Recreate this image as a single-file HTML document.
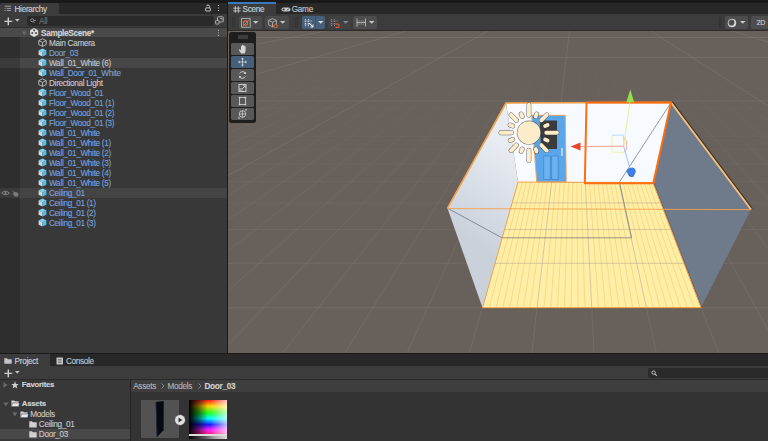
<!DOCTYPE html>
<html><head><meta charset="utf-8">
<style>
*{margin:0;padding:0;box-sizing:border-box}
html,body{width:768px;height:441px;overflow:hidden;background:#191919;font-family:"Liberation Sans",sans-serif;font-size:8.2px;letter-spacing:-0.3px;color:#c8c8c8}
.a{position:absolute}
.t{position:absolute;white-space:nowrap;line-height:10px;-webkit-text-stroke:0.12px currentColor}
.blue{color:#76a2dc}
</style></head><body>


<!-- ===== Hierarchy panel ===== -->
<div class="a" style="left:0;top:3px;width:227px;height:11px;background:#282828"></div>
<div class="a" style="left:0;top:3px;width:59px;height:11px;background:#3c3c3c;border-radius:2px 2px 0 0"></div>
<div class="a" style="left:0;top:14px;width:227px;height:13px;background:#3c3c3c"></div>
<div class="a" style="left:0;top:27px;width:227px;height:326px;background:#383838"></div>
<div class="a" style="left:0;top:37px;width:20px;height:316px;background:#2e2e2e"></div>
<div class="a" style="left:0;top:28px;width:227px;height:9px;background:#4a4a4a"></div>
<div class="a" style="left:0;top:58px;width:20px;height:10px;background:#3a3a3a"></div>
<div class="a" style="left:20px;top:58px;width:207px;height:10px;background:#474747"></div>
<div class="a" style="left:0;top:188px;width:20px;height:10px;background:#3a3a3a"></div>
<div class="a" style="left:20px;top:188px;width:207px;height:10px;background:#444444"></div>


<!-- hierarchy tab content -->
<svg class="a" style="left:4px;top:5px" width="8" height="7"><path d="M0.8 1.2H7M0.6 3.4H1.6M2.8 3.4H7M0.6 5.5H1.6M2.8 5.5H7" stroke="#c0c0c0" stroke-width="0.75"/></svg>
<div class="t" style="left:14.5px;top:5.1px;color:#d2d2d2">Hierarchy</div>
<svg class="a" style="left:205px;top:3.9px" width="6" height="8"><path d="M1.4 2.2 A1.65 1.65 0 0 1 4.6 2.3 V3.8" fill="none" stroke="#c4c4c4" stroke-width="1"/><rect x="0.6" y="3.9" width="4.8" height="3.1" rx="0.4" fill="none" stroke="#c4c4c4" stroke-width="1"/></svg>
<div class="a" style="left:217.6px;top:5px;width:1.2px;height:1.2px;background:#c4c4c4;box-shadow:0 2.5px #c4c4c4,0 5px #c4c4c4"></div>
<!-- toolbar -->
<svg class="a" style="left:3.5px;top:16.5px" width="9" height="9"><path d="M4.3 0.5V8.3M0.5 4.4H8.2" stroke="#d0d0d0" stroke-width="1.4"/></svg>
<svg class="a" style="left:14.5px;top:19.2px" width="5" height="3"><path d="M0 0H4.6L2.3 2.7Z" fill="#c4c4c4"/></svg>
<div class="a" style="left:27px;top:15.6px;width:187px;height:10.2px;background:#2a2a2a;border-radius:2.5px"></div>
<svg class="a" style="left:30px;top:18px" width="7" height="6"><circle cx="2.2" cy="2.3" r="1.5" fill="none" stroke="#9a9a9a" stroke-width="0.9"/><path d="M3.3 3.4 L4.6 4.8 M4 2.4 H6" stroke="#9a9a9a" stroke-width="0.9"/></svg>
<div class="t" style="left:39px;top:16.6px;color:#6f6f6f">All</div>
<svg class="a" style="left:214.5px;top:16px" width="9" height="9"><rect x="2.5" y="0.8" width="5.8" height="5.2" rx="0.8" fill="none" stroke="#b8b8b8" stroke-width="0.9"/><rect x="0.6" y="4.4" width="3.4" height="3.6" rx="0.6" fill="#3c3c3c" stroke="#b8b8b8" stroke-width="0.9"/><path d="M5 2.5h2v2" fill="none" stroke="#b8b8b8" stroke-width="0.8"/></svg>
<div class="a" style="left:0;top:27px;width:227px;height:1px;background:#303030"></div>
<!-- scene row -->
<svg class="a" style="left:22px;top:30.5px" width="5" height="5"><path d="M0 0.5H4.6L2.3 4.3Z" fill="#6a6a6a"/></svg>
<svg class="a" style="left:29.8px;top:28.2px" width="9" height="9"><path d="M4.1 0.3 L7.9 2.4 L7.9 6.5 L4.1 8.7 L0.3 6.5 L0.3 2.4Z" fill="#e4e4e4" stroke="#e4e4e4" stroke-width="0.5" stroke-linejoin="round"/><circle cx="4.1" cy="2.3" r="1.1" fill="#555"/><circle cx="2.3" cy="5.1" r="1.1" fill="#555"/><circle cx="5.9" cy="5.1" r="1.1" fill="#555"/></svg>
<div class="t" style="left:41px;top:28.8px;font-weight:bold;color:#d4d4d4">SampleScene*</div>
<div class="a" style="left:218.3px;top:29.5px;width:1.2px;height:1.2px;background:#aaaaaa;box-shadow:0 2.5px #aaaaaa,0 5px #aaaaaa"></div>
<!-- eye & hand on Ceiling_01 row -->
<svg class="a" style="left:1px;top:189.5px" width="9" height="6"><path d="M0.6 3 Q4.5 -0.6 8.4 3 Q4.5 6.6 0.6 3Z" fill="none" stroke="#8a8a8a" stroke-width="0.9"/><circle cx="4.5" cy="3" r="1.1" fill="#8a8a8a"/></svg>
<svg class="a" style="left:11px;top:189px" width="8" height="8"><path d="M1 1 L3.5 3.5 L3.5 2.8 Q4.5 2.5 5 3.2 Q6 3 6.5 3.8 Q7.5 4 7.4 5 L7 7.5 H3.8 L1.5 4.8 Q2 4.2 3 4.8 Z" fill="#7a7a7a"/></svg>
<svg class="a" style="left:38px;top:37.9px" width="9" height="9"><path d="M4.5 0.8 L8.2 2.6 L8.2 6.6 L4.5 8.4 L0.8 6.6 L0.8 2.6 Z M0.8 2.6 L4.5 4.4 L8.2 2.6 M4.5 4.4 L4.5 8.4" fill="none" stroke="#bdbdbd" stroke-width="0.9" stroke-linejoin="round"/></svg>
<div class="t" style="left:49px;top:38.8px">Main Camera</div>
<svg class="a" style="left:38px;top:47.9px" width="9" height="9"><path d="M4.5 0.6 L8.4 2.5 L4.5 4.4 L0.6 2.5 Z" fill="#7fd3f2"/><path d="M0.6 2.6 L4.5 4.5 L4.5 8.6 L0.6 6.7 Z" fill="#d6d6d6"/><path d="M8.4 2.6 L8.4 6.7 L4.5 8.6 L4.5 4.5 Z" fill="#4fc0ee"/></svg>
<div class="t blue" style="left:49px;top:48.8px">Door_03</div>
<svg class="a" style="left:38px;top:57.9px" width="9" height="9"><path d="M4.5 0.6 L8.4 2.5 L4.5 4.4 L0.6 2.5 Z" fill="#7fd3f2"/><path d="M0.6 2.6 L4.5 4.5 L4.5 8.6 L0.6 6.7 Z" fill="#d6d6d6"/><path d="M8.4 2.6 L8.4 6.7 L4.5 8.6 L4.5 4.5 Z" fill="#4fc0ee"/></svg>
<div class="t" style="left:49px;top:58.8px">Wall_01_White (6)</div>
<svg class="a" style="left:38px;top:67.9px" width="9" height="9"><path d="M4.5 0.6 L8.4 2.5 L4.5 4.4 L0.6 2.5 Z" fill="#7fd3f2"/><path d="M0.6 2.6 L4.5 4.5 L4.5 8.6 L0.6 6.7 Z" fill="#d6d6d6"/><path d="M8.4 2.6 L8.4 6.7 L4.5 8.6 L4.5 4.5 Z" fill="#4fc0ee"/></svg>
<div class="t blue" style="left:49px;top:68.8px">Wall_Door_01_White</div>
<svg class="a" style="left:38px;top:77.9px" width="9" height="9"><path d="M4.5 0.8 L8.2 2.6 L8.2 6.6 L4.5 8.4 L0.8 6.6 L0.8 2.6 Z M0.8 2.6 L4.5 4.4 L8.2 2.6 M4.5 4.4 L4.5 8.4" fill="none" stroke="#bdbdbd" stroke-width="0.9" stroke-linejoin="round"/></svg>
<div class="t" style="left:49px;top:78.8px">Directional Light</div>
<svg class="a" style="left:38px;top:87.9px" width="9" height="9"><path d="M4.5 0.6 L8.4 2.5 L4.5 4.4 L0.6 2.5 Z" fill="#7fd3f2"/><path d="M0.6 2.6 L4.5 4.5 L4.5 8.6 L0.6 6.7 Z" fill="#d6d6d6"/><path d="M8.4 2.6 L8.4 6.7 L4.5 8.6 L4.5 4.5 Z" fill="#4fc0ee"/></svg>
<div class="t blue" style="left:49px;top:88.8px">Floor_Wood_01</div>
<svg class="a" style="left:38px;top:97.9px" width="9" height="9"><path d="M4.5 0.6 L8.4 2.5 L4.5 4.4 L0.6 2.5 Z" fill="#7fd3f2"/><path d="M0.6 2.6 L4.5 4.5 L4.5 8.6 L0.6 6.7 Z" fill="#d6d6d6"/><path d="M8.4 2.6 L8.4 6.7 L4.5 8.6 L4.5 4.5 Z" fill="#4fc0ee"/></svg>
<div class="t blue" style="left:49px;top:98.8px">Floor_Wood_01 (1)</div>
<svg class="a" style="left:38px;top:107.9px" width="9" height="9"><path d="M4.5 0.6 L8.4 2.5 L4.5 4.4 L0.6 2.5 Z" fill="#7fd3f2"/><path d="M0.6 2.6 L4.5 4.5 L4.5 8.6 L0.6 6.7 Z" fill="#d6d6d6"/><path d="M8.4 2.6 L8.4 6.7 L4.5 8.6 L4.5 4.5 Z" fill="#4fc0ee"/></svg>
<div class="t blue" style="left:49px;top:108.8px">Floor_Wood_01 (2)</div>
<svg class="a" style="left:38px;top:117.9px" width="9" height="9"><path d="M4.5 0.6 L8.4 2.5 L4.5 4.4 L0.6 2.5 Z" fill="#7fd3f2"/><path d="M0.6 2.6 L4.5 4.5 L4.5 8.6 L0.6 6.7 Z" fill="#d6d6d6"/><path d="M8.4 2.6 L8.4 6.7 L4.5 8.6 L4.5 4.5 Z" fill="#4fc0ee"/></svg>
<div class="t blue" style="left:49px;top:118.8px">Floor_Wood_01 (3)</div>
<svg class="a" style="left:38px;top:127.9px" width="9" height="9"><path d="M4.5 0.6 L8.4 2.5 L4.5 4.4 L0.6 2.5 Z" fill="#7fd3f2"/><path d="M0.6 2.6 L4.5 4.5 L4.5 8.6 L0.6 6.7 Z" fill="#d6d6d6"/><path d="M8.4 2.6 L8.4 6.7 L4.5 8.6 L4.5 4.5 Z" fill="#4fc0ee"/></svg>
<div class="t blue" style="left:49px;top:128.8px">Wall_01_White</div>
<svg class="a" style="left:38px;top:137.9px" width="9" height="9"><path d="M4.5 0.6 L8.4 2.5 L4.5 4.4 L0.6 2.5 Z" fill="#7fd3f2"/><path d="M0.6 2.6 L4.5 4.5 L4.5 8.6 L0.6 6.7 Z" fill="#d6d6d6"/><path d="M8.4 2.6 L8.4 6.7 L4.5 8.6 L4.5 4.5 Z" fill="#4fc0ee"/></svg>
<div class="t blue" style="left:49px;top:138.8px">Wall_01_White (1)</div>
<svg class="a" style="left:38px;top:147.9px" width="9" height="9"><path d="M4.5 0.6 L8.4 2.5 L4.5 4.4 L0.6 2.5 Z" fill="#7fd3f2"/><path d="M0.6 2.6 L4.5 4.5 L4.5 8.6 L0.6 6.7 Z" fill="#d6d6d6"/><path d="M8.4 2.6 L8.4 6.7 L4.5 8.6 L4.5 4.5 Z" fill="#4fc0ee"/></svg>
<div class="t blue" style="left:49px;top:148.8px">Wall_01_White (2)</div>
<svg class="a" style="left:38px;top:157.9px" width="9" height="9"><path d="M4.5 0.6 L8.4 2.5 L4.5 4.4 L0.6 2.5 Z" fill="#7fd3f2"/><path d="M0.6 2.6 L4.5 4.5 L4.5 8.6 L0.6 6.7 Z" fill="#d6d6d6"/><path d="M8.4 2.6 L8.4 6.7 L4.5 8.6 L4.5 4.5 Z" fill="#4fc0ee"/></svg>
<div class="t blue" style="left:49px;top:158.8px">Wall_01_White (3)</div>
<svg class="a" style="left:38px;top:167.9px" width="9" height="9"><path d="M4.5 0.6 L8.4 2.5 L4.5 4.4 L0.6 2.5 Z" fill="#7fd3f2"/><path d="M0.6 2.6 L4.5 4.5 L4.5 8.6 L0.6 6.7 Z" fill="#d6d6d6"/><path d="M8.4 2.6 L8.4 6.7 L4.5 8.6 L4.5 4.5 Z" fill="#4fc0ee"/></svg>
<div class="t blue" style="left:49px;top:168.8px">Wall_01_White (4)</div>
<svg class="a" style="left:38px;top:177.9px" width="9" height="9"><path d="M4.5 0.6 L8.4 2.5 L4.5 4.4 L0.6 2.5 Z" fill="#7fd3f2"/><path d="M0.6 2.6 L4.5 4.5 L4.5 8.6 L0.6 6.7 Z" fill="#d6d6d6"/><path d="M8.4 2.6 L8.4 6.7 L4.5 8.6 L4.5 4.5 Z" fill="#4fc0ee"/></svg>
<div class="t blue" style="left:49px;top:178.8px">Wall_01_White (5)</div>
<svg class="a" style="left:38px;top:187.9px" width="9" height="9"><path d="M4.5 0.6 L8.4 2.5 L4.5 4.4 L0.6 2.5 Z" fill="#7fd3f2"/><path d="M0.6 2.6 L4.5 4.5 L4.5 8.6 L0.6 6.7 Z" fill="#d6d6d6"/><path d="M8.4 2.6 L8.4 6.7 L4.5 8.6 L4.5 4.5 Z" fill="#4fc0ee"/></svg>
<div class="t blue" style="left:49px;top:188.8px">Ceiling_01</div>
<svg class="a" style="left:38px;top:197.9px" width="9" height="9"><path d="M4.5 0.6 L8.4 2.5 L4.5 4.4 L0.6 2.5 Z" fill="#7fd3f2"/><path d="M0.6 2.6 L4.5 4.5 L4.5 8.6 L0.6 6.7 Z" fill="#d6d6d6"/><path d="M8.4 2.6 L8.4 6.7 L4.5 8.6 L4.5 4.5 Z" fill="#4fc0ee"/></svg>
<div class="t blue" style="left:49px;top:198.8px">Ceiling_01 (1)</div>
<svg class="a" style="left:38px;top:207.9px" width="9" height="9"><path d="M4.5 0.6 L8.4 2.5 L4.5 4.4 L0.6 2.5 Z" fill="#7fd3f2"/><path d="M0.6 2.6 L4.5 4.5 L4.5 8.6 L0.6 6.7 Z" fill="#d6d6d6"/><path d="M8.4 2.6 L8.4 6.7 L4.5 8.6 L4.5 4.5 Z" fill="#4fc0ee"/></svg>
<div class="t blue" style="left:49px;top:208.8px">Ceiling_01 (2)</div>
<svg class="a" style="left:38px;top:217.9px" width="9" height="9"><path d="M4.5 0.6 L8.4 2.5 L4.5 4.4 L0.6 2.5 Z" fill="#7fd3f2"/><path d="M0.6 2.6 L4.5 4.5 L4.5 8.6 L0.6 6.7 Z" fill="#d6d6d6"/><path d="M8.4 2.6 L8.4 6.7 L4.5 8.6 L4.5 4.5 Z" fill="#4fc0ee"/></svg>
<div class="t blue" style="left:49px;top:218.8px">Ceiling_01 (3)</div>
<!-- separator -->
<div class="a" style="left:227px;top:3px;width:1px;height:350px;background:#191919"></div>

<!-- ===== Scene panel ===== -->
<div class="a" style="left:228px;top:3px;width:540px;height:11px;background:#282828"></div>
<div class="a" style="left:228px;top:3px;width:48px;height:11px;background:#3c3c3c"></div>
<div class="a" style="left:228px;top:2px;width:48px;height:2px;background:#3a79bb"></div>
<div class="a" style="left:228px;top:14px;width:540px;height:16px;background:#3c3c3c"></div>
<!--SCENE--><svg class="a" style="left:228px;top:30px" width="540" height="323" viewBox="228 30 540 323">
<defs>
<linearGradient id="gfade" gradientUnits="userSpaceOnUse" x1="0" y1="30" x2="0" y2="353"><stop offset="0" stop-color="#c8c4c0" stop-opacity="0.0"/><stop offset="0.5" stop-color="#c8c4c0" stop-opacity="0.07"/><stop offset="1" stop-color="#c8c4c0" stop-opacity="0.12"/></linearGradient>
<linearGradient id="lw" gradientUnits="userSpaceOnUse" x1="510" y1="150" x2="455" y2="230"><stop offset="0" stop-color="#e8ecf2"/><stop offset="1" stop-color="#cad1db"/></linearGradient>
</defs>
<rect x="228" y="30" width="540" height="323" fill="#68615b"/>
<line x1="228" y1="307.80" x2="768" y2="307.80" stroke="#c8c4c0" stroke-opacity="0.110" stroke-width="0.9"/>
<line x1="228" y1="263.26" x2="768" y2="263.26" stroke="#c8c4c0" stroke-opacity="0.130" stroke-width="0.9"/>
<line x1="228" y1="229.45" x2="768" y2="229.45" stroke="#c8c4c0" stroke-opacity="0.082" stroke-width="0.9"/>
<line x1="228" y1="202.91" x2="768" y2="202.91" stroke="#c8c4c0" stroke-opacity="0.071" stroke-width="0.9"/>
<line x1="228" y1="181.53" x2="768" y2="181.53" stroke="#c8c4c0" stroke-opacity="0.061" stroke-width="0.9"/>
<line x1="228" y1="163.92" x2="768" y2="163.92" stroke="#c8c4c0" stroke-opacity="0.053" stroke-width="0.9"/>
<line x1="228" y1="149.18" x2="768" y2="149.18" stroke="#c8c4c0" stroke-opacity="0.047" stroke-width="0.9"/>
<line x1="228" y1="136.66" x2="768" y2="136.66" stroke="#c8c4c0" stroke-opacity="0.041" stroke-width="0.9"/>
<line x1="228" y1="125.89" x2="768" y2="125.89" stroke="#c8c4c0" stroke-opacity="0.037" stroke-width="0.9"/>
<line x1="228" y1="116.52" x2="768" y2="116.52" stroke="#c8c4c0" stroke-opacity="0.033" stroke-width="0.9"/>
<line x1="228" y1="108.31" x2="768" y2="108.31" stroke="#c8c4c0" stroke-opacity="0.029" stroke-width="0.9"/>
<line x1="228" y1="101.04" x2="768" y2="101.04" stroke="#c8c4c0" stroke-opacity="0.130" stroke-width="0.9"/>
<line x1="228" y1="94.57" x2="768" y2="94.57" stroke="#c8c4c0" stroke-opacity="0.023" stroke-width="0.9"/>
<line x1="228" y1="88.77" x2="768" y2="88.77" stroke="#c8c4c0" stroke-opacity="0.020" stroke-width="0.9"/>
<line x1="228" y1="83.54" x2="768" y2="83.54" stroke="#c8c4c0" stroke-opacity="0.018" stroke-width="0.9"/>
<line x1="228" y1="78.80" x2="768" y2="78.80" stroke="#c8c4c0" stroke-opacity="0.016" stroke-width="0.9"/>
<line x1="228" y1="74.49" x2="768" y2="74.49" stroke="#c8c4c0" stroke-opacity="0.014" stroke-width="0.9"/>
<line x1="228" y1="70.54" x2="768" y2="70.54" stroke="#c8c4c0" stroke-opacity="0.012" stroke-width="0.9"/>
<line x1="228" y1="66.92" x2="768" y2="66.92" stroke="#c8c4c0" stroke-opacity="0.011" stroke-width="0.9"/>
<line x1="228" y1="57.66" x2="768" y2="57.66" stroke="#c8c4c0" stroke-opacity="0.130" stroke-width="0.9"/>
<line x1="228" y1="37.54" x2="768" y2="37.54" stroke="#c8c4c0" stroke-opacity="0.130" stroke-width="0.9"/>
<line x1="234.51" y1="30" x2="-2085.68" y2="353" stroke="url(#gfade)" stroke-width="0.9"/>
<line x1="242.49" y1="30" x2="-2023.36" y2="353" stroke="url(#gfade)" stroke-width="0.9"/>
<line x1="250.46" y1="30" x2="-1961.04" y2="353" stroke="#c8c4c0" stroke-opacity="0.13" stroke-width="0.9"/>
<line x1="258.44" y1="30" x2="-1898.72" y2="353" stroke="url(#gfade)" stroke-width="0.9"/>
<line x1="266.41" y1="30" x2="-1836.40" y2="353" stroke="url(#gfade)" stroke-width="0.9"/>
<line x1="274.39" y1="30" x2="-1774.08" y2="353" stroke="url(#gfade)" stroke-width="0.9"/>
<line x1="282.36" y1="30" x2="-1711.76" y2="353" stroke="url(#gfade)" stroke-width="0.9"/>
<line x1="290.34" y1="30" x2="-1649.44" y2="353" stroke="url(#gfade)" stroke-width="0.9"/>
<line x1="298.31" y1="30" x2="-1587.12" y2="353" stroke="url(#gfade)" stroke-width="0.9"/>
<line x1="306.29" y1="30" x2="-1524.80" y2="353" stroke="url(#gfade)" stroke-width="0.9"/>
<line x1="314.26" y1="30" x2="-1462.48" y2="353" stroke="url(#gfade)" stroke-width="0.9"/>
<line x1="322.24" y1="30" x2="-1400.16" y2="353" stroke="url(#gfade)" stroke-width="0.9"/>
<line x1="330.21" y1="30" x2="-1337.84" y2="353" stroke="#c8c4c0" stroke-opacity="0.13" stroke-width="0.9"/>
<line x1="338.19" y1="30" x2="-1275.52" y2="353" stroke="url(#gfade)" stroke-width="0.9"/>
<line x1="346.16" y1="30" x2="-1213.20" y2="353" stroke="url(#gfade)" stroke-width="0.9"/>
<line x1="354.14" y1="30" x2="-1150.88" y2="353" stroke="url(#gfade)" stroke-width="0.9"/>
<line x1="362.11" y1="30" x2="-1088.56" y2="353" stroke="url(#gfade)" stroke-width="0.9"/>
<line x1="370.09" y1="30" x2="-1026.24" y2="353" stroke="url(#gfade)" stroke-width="0.9"/>
<line x1="378.06" y1="30" x2="-963.92" y2="353" stroke="url(#gfade)" stroke-width="0.9"/>
<line x1="386.04" y1="30" x2="-901.60" y2="353" stroke="url(#gfade)" stroke-width="0.9"/>
<line x1="394.01" y1="30" x2="-839.28" y2="353" stroke="url(#gfade)" stroke-width="0.9"/>
<line x1="401.99" y1="30" x2="-776.96" y2="353" stroke="url(#gfade)" stroke-width="0.9"/>
<line x1="409.97" y1="30" x2="-714.64" y2="353" stroke="#c8c4c0" stroke-opacity="0.13" stroke-width="0.9"/>
<line x1="417.94" y1="30" x2="-652.32" y2="353" stroke="url(#gfade)" stroke-width="0.9"/>
<line x1="425.92" y1="30" x2="-590.00" y2="353" stroke="url(#gfade)" stroke-width="0.9"/>
<line x1="433.89" y1="30" x2="-527.68" y2="353" stroke="url(#gfade)" stroke-width="0.9"/>
<line x1="441.87" y1="30" x2="-465.36" y2="353" stroke="url(#gfade)" stroke-width="0.9"/>
<line x1="449.84" y1="30" x2="-403.04" y2="353" stroke="url(#gfade)" stroke-width="0.9"/>
<line x1="457.82" y1="30" x2="-340.72" y2="353" stroke="url(#gfade)" stroke-width="0.9"/>
<line x1="465.79" y1="30" x2="-278.40" y2="353" stroke="url(#gfade)" stroke-width="0.9"/>
<line x1="473.77" y1="30" x2="-216.08" y2="353" stroke="url(#gfade)" stroke-width="0.9"/>
<line x1="481.74" y1="30" x2="-153.76" y2="353" stroke="url(#gfade)" stroke-width="0.9"/>
<line x1="489.72" y1="30" x2="-91.44" y2="353" stroke="#c8c4c0" stroke-opacity="0.13" stroke-width="0.9"/>
<line x1="497.69" y1="30" x2="-29.12" y2="353" stroke="url(#gfade)" stroke-width="0.9"/>
<line x1="505.67" y1="30" x2="33.20" y2="353" stroke="url(#gfade)" stroke-width="0.9"/>
<line x1="513.64" y1="30" x2="95.52" y2="353" stroke="url(#gfade)" stroke-width="0.9"/>
<line x1="521.62" y1="30" x2="157.84" y2="353" stroke="url(#gfade)" stroke-width="0.9"/>
<line x1="529.59" y1="30" x2="220.16" y2="353" stroke="url(#gfade)" stroke-width="0.9"/>
<line x1="537.57" y1="30" x2="282.48" y2="353" stroke="url(#gfade)" stroke-width="0.9"/>
<line x1="545.54" y1="30" x2="344.80" y2="353" stroke="url(#gfade)" stroke-width="0.9"/>
<line x1="553.52" y1="30" x2="407.12" y2="353" stroke="url(#gfade)" stroke-width="0.9"/>
<line x1="561.49" y1="30" x2="469.44" y2="353" stroke="url(#gfade)" stroke-width="0.9"/>
<line x1="569.47" y1="30" x2="531.76" y2="353" stroke="#c8c4c0" stroke-opacity="0.13" stroke-width="0.9"/>
<line x1="577.44" y1="30" x2="594.08" y2="353" stroke="url(#gfade)" stroke-width="0.9"/>
<line x1="585.42" y1="30" x2="656.40" y2="353" stroke="url(#gfade)" stroke-width="0.9"/>
<line x1="593.39" y1="30" x2="718.72" y2="353" stroke="url(#gfade)" stroke-width="0.9"/>
<line x1="601.37" y1="30" x2="781.04" y2="353" stroke="url(#gfade)" stroke-width="0.9"/>
<line x1="609.34" y1="30" x2="843.35" y2="353" stroke="url(#gfade)" stroke-width="0.9"/>
<line x1="617.32" y1="30" x2="905.67" y2="353" stroke="url(#gfade)" stroke-width="0.9"/>
<line x1="625.29" y1="30" x2="967.99" y2="353" stroke="url(#gfade)" stroke-width="0.9"/>
<line x1="633.27" y1="30" x2="1030.31" y2="353" stroke="url(#gfade)" stroke-width="0.9"/>
<line x1="641.24" y1="30" x2="1092.63" y2="353" stroke="url(#gfade)" stroke-width="0.9"/>
<line x1="649.22" y1="30" x2="1154.95" y2="353" stroke="#c8c4c0" stroke-opacity="0.13" stroke-width="0.9"/>
<line x1="657.19" y1="30" x2="1217.27" y2="353" stroke="url(#gfade)" stroke-width="0.9"/>
<line x1="665.17" y1="30" x2="1279.59" y2="353" stroke="url(#gfade)" stroke-width="0.9"/>
<line x1="673.14" y1="30" x2="1341.91" y2="353" stroke="url(#gfade)" stroke-width="0.9"/>
<line x1="681.12" y1="30" x2="1404.23" y2="353" stroke="url(#gfade)" stroke-width="0.9"/>
<line x1="689.09" y1="30" x2="1466.55" y2="353" stroke="url(#gfade)" stroke-width="0.9"/>
<line x1="697.07" y1="30" x2="1528.87" y2="353" stroke="url(#gfade)" stroke-width="0.9"/>
<line x1="705.04" y1="30" x2="1591.19" y2="353" stroke="url(#gfade)" stroke-width="0.9"/>
<line x1="713.02" y1="30" x2="1653.51" y2="353" stroke="url(#gfade)" stroke-width="0.9"/>
<line x1="720.99" y1="30" x2="1715.83" y2="353" stroke="url(#gfade)" stroke-width="0.9"/>
<line x1="728.97" y1="30" x2="1778.15" y2="353" stroke="#c8c4c0" stroke-opacity="0.13" stroke-width="0.9"/>
<line x1="736.94" y1="30" x2="1840.47" y2="353" stroke="url(#gfade)" stroke-width="0.9"/>
<line x1="744.92" y1="30" x2="1902.79" y2="353" stroke="url(#gfade)" stroke-width="0.9"/>
<line x1="752.89" y1="30" x2="1965.11" y2="353" stroke="url(#gfade)" stroke-width="0.9"/>
<line x1="760.87" y1="30" x2="2027.43" y2="353" stroke="url(#gfade)" stroke-width="0.9"/>
<polygon points="506.00,103.00 447.50,208.20 482.50,307.80 518.00,182.00" fill="url(#lw)"/>
<polygon points="671.00,102.50 751.00,209.50 701.00,307.60 653.00,183.00" fill="#6f7a8b"/>
<polygon points="506.00,103.00 671.00,102.50 653.00,183.00 518.00,182.00" fill="#f7faff"/>
<polygon points="518.00,182.00 653.00,183.00 701.00,307.60 482.50,307.80" fill="#ffefa6"/>
<line x1="522.36" y1="182" x2="489.18" y2="307.7" stroke="#efc46c" stroke-width="1.0" stroke-opacity="0.5"/>
<line x1="526.56" y1="182" x2="496.02" y2="307.7" stroke="#efc46c" stroke-width="1.0" stroke-opacity="0.5"/>
<line x1="530.75" y1="182" x2="502.86" y2="307.7" stroke="#efc46c" stroke-width="1.0" stroke-opacity="0.5"/>
<line x1="534.95" y1="182" x2="509.70" y2="307.7" stroke="#efc46c" stroke-width="1.0" stroke-opacity="0.5"/>
<line x1="539.14" y1="182" x2="516.53" y2="307.7" stroke="#efc46c" stroke-width="1.0" stroke-opacity="0.5"/>
<line x1="543.33" y1="182" x2="523.37" y2="307.7" stroke="#efc46c" stroke-width="1.0" stroke-opacity="0.5"/>
<line x1="547.53" y1="182" x2="530.21" y2="307.7" stroke="#efc46c" stroke-width="1.0" stroke-opacity="0.5"/>
<line x1="555.91" y1="182" x2="543.88" y2="307.7" stroke="#efc46c" stroke-width="1.0" stroke-opacity="0.5"/>
<line x1="560.11" y1="182" x2="550.72" y2="307.7" stroke="#efc46c" stroke-width="1.0" stroke-opacity="0.5"/>
<line x1="564.30" y1="182" x2="557.56" y2="307.7" stroke="#efc46c" stroke-width="1.0" stroke-opacity="0.5"/>
<line x1="568.49" y1="182" x2="564.39" y2="307.7" stroke="#efc46c" stroke-width="1.0" stroke-opacity="0.5"/>
<line x1="572.69" y1="182" x2="571.23" y2="307.7" stroke="#efc46c" stroke-width="1.0" stroke-opacity="0.5"/>
<line x1="576.88" y1="182" x2="578.07" y2="307.7" stroke="#efc46c" stroke-width="1.0" stroke-opacity="0.5"/>
<line x1="581.08" y1="182" x2="584.91" y2="307.7" stroke="#efc46c" stroke-width="1.0" stroke-opacity="0.5"/>
<line x1="589.46" y1="182" x2="598.58" y2="307.7" stroke="#efc46c" stroke-width="1.0" stroke-opacity="0.5"/>
<line x1="593.66" y1="182" x2="605.42" y2="307.7" stroke="#efc46c" stroke-width="1.0" stroke-opacity="0.5"/>
<line x1="597.85" y1="182" x2="612.25" y2="307.7" stroke="#efc46c" stroke-width="1.0" stroke-opacity="0.5"/>
<line x1="602.04" y1="182" x2="619.09" y2="307.7" stroke="#efc46c" stroke-width="1.0" stroke-opacity="0.5"/>
<line x1="606.24" y1="182" x2="625.93" y2="307.7" stroke="#efc46c" stroke-width="1.0" stroke-opacity="0.5"/>
<line x1="610.43" y1="182" x2="632.77" y2="307.7" stroke="#efc46c" stroke-width="1.0" stroke-opacity="0.5"/>
<line x1="614.62" y1="182" x2="639.60" y2="307.7" stroke="#efc46c" stroke-width="1.0" stroke-opacity="0.5"/>
<line x1="623.01" y1="182" x2="653.28" y2="307.7" stroke="#efc46c" stroke-width="1.0" stroke-opacity="0.5"/>
<line x1="627.21" y1="182" x2="660.12" y2="307.7" stroke="#efc46c" stroke-width="1.0" stroke-opacity="0.5"/>
<line x1="631.40" y1="182" x2="666.95" y2="307.7" stroke="#efc46c" stroke-width="1.0" stroke-opacity="0.5"/>
<line x1="635.59" y1="182" x2="673.79" y2="307.7" stroke="#efc46c" stroke-width="1.0" stroke-opacity="0.5"/>
<line x1="639.79" y1="182" x2="680.63" y2="307.7" stroke="#efc46c" stroke-width="1.0" stroke-opacity="0.5"/>
<line x1="643.98" y1="182" x2="687.46" y2="307.7" stroke="#efc46c" stroke-width="1.0" stroke-opacity="0.5"/>
<line x1="648.17" y1="182" x2="694.30" y2="307.7" stroke="#efc46c" stroke-width="1.0" stroke-opacity="0.5"/>
<line x1="551.72" y1="182" x2="537.04" y2="307.7" stroke="#aaa08a" stroke-width="0.7" stroke-opacity="0.7"/>
<line x1="585.27" y1="182" x2="591.74" y2="307.7" stroke="#aaa08a" stroke-width="0.7" stroke-opacity="0.7"/>
<line x1="618.82" y1="182" x2="646.44" y2="307.7" stroke="#aaa08a" stroke-width="0.7" stroke-opacity="0.7"/>
<line x1="495.01" y1="263.26" x2="683.90" y2="263.26" stroke="#aaa08a" stroke-width="0.7" stroke-opacity="0.7"/>
<line x1="504.65" y1="229.45" x2="670.78" y2="229.45" stroke="#aaa08a" stroke-width="0.7" stroke-opacity="0.7"/>
<line x1="512.21" y1="202.91" x2="660.48" y2="202.91" stroke="#aaa08a" stroke-width="0.7" stroke-opacity="0.7"/>
<polyline points="671,102.5 619.5,182 631.6,237.8 502,237.8 447.5,208.2" fill="none" stroke="#5a6272" stroke-width="0.8" stroke-opacity="0.8"/>
<polygon points="531.6,115.3 565.3,115.3 566.3,182 536.7,182" fill="#5aa6ea" stroke="#f3a455" stroke-width="0.9"/>
<polygon points="539.8,120.4 557,120.4 557,149 541,149" fill="#3b3b3d"/>
<path d="M543.7 156 h6.6 v23.5 h-6.6z M551.6 156 h6.6 v23.5 h-6.6z" fill="#6ab2f2" stroke="#3a7cc0" stroke-width="0.6"/>
<line x1="562" y1="148" x2="562" y2="156" stroke="#ffffff" stroke-width="1"/>
<polyline points="672.3,101.6 752.3,208.6" fill="none" stroke="#3a2e22" stroke-opacity="0.8" stroke-width="1.2"/>
<polyline points="447.50,208.20 506.00,103.00 671.00,102.50 751.00,209.50" fill="none" stroke="#f4a24a" stroke-width="1.6" stroke-linejoin="round"/>
<polyline points="671.00,102.50 751.00,209.50" fill="none" stroke="#f3c486" stroke-width="1.3"/>
<polyline points="482.50,307.80 701.00,307.60" fill="none" stroke="#f4a24a" stroke-width="1.1"/>
<polyline points="482.5,308.8 701,308.6" fill="none" stroke="#6a5a40" stroke-opacity="0.6" stroke-width="0.8"/>
<polyline points="518.00,182.00 482.50,307.80" fill="none" stroke="#f4a24a" stroke-width="0.9"/>
<polyline points="654,183 702,307.6" fill="none" stroke="#5a5040" stroke-opacity="0.6" stroke-width="0.8"/>
<polyline points="653.00,183.00 701.00,307.60" fill="none" stroke="#f4a24a" stroke-width="1.0"/>
<line x1="518" y1="182" x2="653" y2="182.5" stroke="#f4a24a" stroke-width="0.9"/>
<line x1="447.5" y1="208.6" x2="751" y2="209.6" stroke="#f4a24a" stroke-width="0.9"/>
<polygon points="586.5,102.4 671,102.4 653.3,183.2 584.8,183.2" fill="none" stroke="#ff6d10" stroke-width="2" stroke-linejoin="round"/>
<path d="M612 135.2 H623.7 V146.2" fill="none" stroke="#9cc8ff" stroke-width="0.7" stroke-opacity="0.9"/>
<path d="M612 135.2 V152.3 H623.7" fill="none" stroke="#e8f07a" stroke-width="0.7" stroke-opacity="0.9"/>
<path d="M623.7 137 L626.5 141 L626.5 150 L623.7 152.3" fill="none" stroke="#ff8870" stroke-width="0.7" stroke-opacity="0.9"/>
<line x1="623.7" y1="146.2" x2="580" y2="146.5" stroke="#f58a70" stroke-width="0.8"/>
<polygon points="570.5,146.5 580.5,142.6 580.5,150.4" fill="#e8452a"/>
<line x1="623.7" y1="146.2" x2="630" y2="101" stroke="#dcef80" stroke-width="0.8"/>
<polygon points="630.3,89.5 634.2,102.3 626.3,102.3" fill="#8fe04a"/>
<line x1="623.7" y1="146.2" x2="629.5" y2="167" stroke="#86bff5" stroke-width="0.9"/>
<path d="M626.2 171.5 Q628 167.5 632.5 167.6 Q636.5 168.8 635.5 172.5 L633.3 177.3 Z" fill="#3f7fe8"/>
<path d="M626.2 171.5 L633.3 177.3 L629.5 176.5Z" fill="#2a5fc0"/>
<line x1="528.90" y1="115.30" x2="528.90" y2="104.70" stroke="#3a3530" stroke-opacity="0.7" stroke-width="4.9" stroke-linecap="round"/>
<line x1="535.64" y1="116.44" x2="536.63" y2="114.04" stroke="#3a3530" stroke-opacity="0.7" stroke-width="4.9" stroke-linecap="round"/>
<line x1="541.35" y1="120.25" x2="546.72" y2="114.88" stroke="#3a3530" stroke-opacity="0.7" stroke-width="4.9" stroke-linecap="round"/>
<line x1="545.16" y1="125.96" x2="547.56" y2="124.97" stroke="#3a3530" stroke-opacity="0.7" stroke-width="4.9" stroke-linecap="round"/>
<line x1="546.30" y1="132.70" x2="556.90" y2="132.70" stroke="#3a3530" stroke-opacity="0.7" stroke-width="4.9" stroke-linecap="round"/>
<line x1="545.16" y1="139.44" x2="547.56" y2="140.43" stroke="#3a3530" stroke-opacity="0.7" stroke-width="4.9" stroke-linecap="round"/>
<line x1="541.35" y1="145.15" x2="546.72" y2="150.52" stroke="#3a3530" stroke-opacity="0.7" stroke-width="4.9" stroke-linecap="round"/>
<line x1="535.64" y1="148.96" x2="536.63" y2="151.36" stroke="#3a3530" stroke-opacity="0.7" stroke-width="4.9" stroke-linecap="round"/>
<line x1="528.90" y1="150.10" x2="528.90" y2="160.70" stroke="#3a3530" stroke-opacity="0.7" stroke-width="4.9" stroke-linecap="round"/>
<line x1="522.16" y1="148.96" x2="521.17" y2="151.36" stroke="#3a3530" stroke-opacity="0.7" stroke-width="4.9" stroke-linecap="round"/>
<line x1="516.45" y1="145.15" x2="511.08" y2="150.52" stroke="#3a3530" stroke-opacity="0.7" stroke-width="4.9" stroke-linecap="round"/>
<line x1="512.64" y1="139.44" x2="510.24" y2="140.43" stroke="#3a3530" stroke-opacity="0.7" stroke-width="4.9" stroke-linecap="round"/>
<line x1="511.50" y1="132.70" x2="500.90" y2="132.70" stroke="#3a3530" stroke-opacity="0.7" stroke-width="4.9" stroke-linecap="round"/>
<line x1="512.64" y1="125.96" x2="510.24" y2="124.97" stroke="#3a3530" stroke-opacity="0.7" stroke-width="4.9" stroke-linecap="round"/>
<line x1="516.45" y1="120.25" x2="511.08" y2="114.88" stroke="#3a3530" stroke-opacity="0.7" stroke-width="4.9" stroke-linecap="round"/>
<line x1="522.16" y1="116.44" x2="521.17" y2="114.04" stroke="#3a3530" stroke-opacity="0.7" stroke-width="4.9" stroke-linecap="round"/>
<line x1="528.90" y1="115.30" x2="528.90" y2="104.70" stroke="#fdecca" stroke-opacity="1" stroke-width="3.9" stroke-linecap="round"/>
<line x1="535.64" y1="116.44" x2="536.63" y2="114.04" stroke="#fdecca" stroke-opacity="1" stroke-width="3.9" stroke-linecap="round"/>
<line x1="541.35" y1="120.25" x2="546.72" y2="114.88" stroke="#fdecca" stroke-opacity="1" stroke-width="3.9" stroke-linecap="round"/>
<line x1="545.16" y1="125.96" x2="547.56" y2="124.97" stroke="#fdecca" stroke-opacity="1" stroke-width="3.9" stroke-linecap="round"/>
<line x1="546.30" y1="132.70" x2="556.90" y2="132.70" stroke="#fdecca" stroke-opacity="1" stroke-width="3.9" stroke-linecap="round"/>
<line x1="545.16" y1="139.44" x2="547.56" y2="140.43" stroke="#fdecca" stroke-opacity="1" stroke-width="3.9" stroke-linecap="round"/>
<line x1="541.35" y1="145.15" x2="546.72" y2="150.52" stroke="#fdecca" stroke-opacity="1" stroke-width="3.9" stroke-linecap="round"/>
<line x1="535.64" y1="148.96" x2="536.63" y2="151.36" stroke="#fdecca" stroke-opacity="1" stroke-width="3.9" stroke-linecap="round"/>
<line x1="528.90" y1="150.10" x2="528.90" y2="160.70" stroke="#fdecca" stroke-opacity="1" stroke-width="3.9" stroke-linecap="round"/>
<line x1="522.16" y1="148.96" x2="521.17" y2="151.36" stroke="#fdecca" stroke-opacity="1" stroke-width="3.9" stroke-linecap="round"/>
<line x1="516.45" y1="145.15" x2="511.08" y2="150.52" stroke="#fdecca" stroke-opacity="1" stroke-width="3.9" stroke-linecap="round"/>
<line x1="512.64" y1="139.44" x2="510.24" y2="140.43" stroke="#fdecca" stroke-opacity="1" stroke-width="3.9" stroke-linecap="round"/>
<line x1="511.50" y1="132.70" x2="500.90" y2="132.70" stroke="#fdecca" stroke-opacity="1" stroke-width="3.9" stroke-linecap="round"/>
<line x1="512.64" y1="125.96" x2="510.24" y2="124.97" stroke="#fdecca" stroke-opacity="1" stroke-width="3.9" stroke-linecap="round"/>
<line x1="516.45" y1="120.25" x2="511.08" y2="114.88" stroke="#fdecca" stroke-opacity="1" stroke-width="3.9" stroke-linecap="round"/>
<line x1="522.16" y1="116.44" x2="521.17" y2="114.04" stroke="#fdecca" stroke-opacity="1" stroke-width="3.9" stroke-linecap="round"/>
<circle cx="528.9" cy="132.7" r="12.1" fill="#3a3530" fill-opacity="0.65"/>
<circle cx="528.9" cy="132.7" r="11.5" fill="#fdecca"/>
</svg><!--/SCENE-->
<div class="a" style="left:228px;top:29.6px;width:540px;height:0.8px;background:#2c2c2c"></div>
<!-- tool palette -->
<div class="a" style="left:229.2px;top:32.2px;width:26.6px;height:91px;background:#1e1e1e;border-radius:2.5px"></div>
<div class="a" style="left:237.7px;top:35px;width:10px;height:4px;background:#3d3d3d"></div>
<div class="a" style="left:231px;top:42.60px;width:23px;height:12.2px;background:#585858;border-radius:1.5px"></div>
<svg class="a" style="left:238px;top:43.90px" width="9" height="10"><path d="M3.2 9.5 Q1.5 7.5 0.8 5.8 Q1.2 5 2.2 5.6 L3 6.5 V2.2 Q3.5 1.5 4 2.2 V5 V1.2 Q4.6 0.5 5.2 1.2 V5 V1.6 Q5.8 0.9 6.4 1.6 V5.2 V2.6 Q7 2 7.6 2.6 V6.5 Q7.5 8.8 6.5 9.5 Z" fill="#d6d6d6"/></svg>
<div class="a" style="left:231px;top:55.65px;width:23px;height:12.2px;background:#46607c;border-radius:1.5px"></div>
<svg class="a" style="left:238px;top:56.95px" width="9" height="10"><path d="M4.5 0.5 L6 2.2 H3Z M4.5 9.5 L6 7.8 H3Z M0 5 L1.7 3.5 V6.5Z M9 5 L7.3 3.5 V6.5Z" fill="#d6d6d6"/><path d="M4.5 2 V8 M1.5 5 H7.5" stroke="#d6d6d6" stroke-width="0.8"/></svg>
<div class="a" style="left:231px;top:68.70px;width:23px;height:12.2px;background:#585858;border-radius:1.5px"></div>
<svg class="a" style="left:238px;top:70.00px" width="9" height="10"><path d="M7.3 3.2 A3.2 3.2 0 0 0 1.6 3.6 M1.7 6.8 A3.2 3.2 0 0 0 7.4 6.4" fill="none" stroke="#d6d6d6" stroke-width="0.9"/><path d="M8 1.8 L7.8 4.2 L5.6 3.4Z M1 8.2 L1.2 5.8 L3.4 6.6Z" fill="#d6d6d6"/></svg>
<div class="a" style="left:231px;top:81.75px;width:23px;height:12.2px;background:#585858;border-radius:1.5px"></div>
<svg class="a" style="left:238px;top:83.05px" width="9" height="10"><rect x="1" y="1.5" width="7" height="7" fill="none" stroke="#d6d6d6" stroke-width="0.9"/><rect x="1" y="5" width="3.5" height="3.5" fill="#d6d6d6" fill-opacity="0.5"/><path d="M4 6 L7 3 M5 2.8 H7.2 V5" fill="none" stroke="#d6d6d6" stroke-width="0.8"/></svg>
<div class="a" style="left:231px;top:94.80px;width:23px;height:12.2px;background:#585858;border-radius:1.5px"></div>
<svg class="a" style="left:238px;top:96.10px" width="9" height="10"><rect x="1.5" y="1.5" width="6" height="7" fill="none" stroke="#d6d6d6" stroke-width="0.8"/><path d="M0.8 0.8h1.5v1.5h-1.5z M6.7 0.8h1.5v1.5h-1.5z M0.8 7.7h1.5v1.5h-1.5z M6.7 7.7h1.5v1.5h-1.5z" fill="#d6d6d6"/></svg>
<div class="a" style="left:231px;top:107.85px;width:23px;height:12.2px;background:#585858;border-radius:1.5px"></div>
<svg class="a" style="left:238px;top:109.15px" width="9" height="10"><circle cx="4.5" cy="5" r="3.3" fill="none" stroke="#d6d6d6" stroke-width="0.8"/><path d="M4.5 1.7 V8.3 M1.2 5 H7.8" stroke="#d6d6d6" stroke-width="0.7"/><path d="M7 1 L8.5 0.5 L8 2 M2 9 L0.5 9.5 L1 8" fill="none" stroke="#d6d6d6" stroke-width="0.7"/></svg>
<!-- scene tabs -->
<svg class="a" style="left:232.5px;top:5.5px" width="8" height="7"><path d="M2.3 0.2V6.8M5.3 0.2V6.8M0.2 2.2H7.6M0.2 4.9H7.6" stroke="#c8c8c8" stroke-width="0.9"/></svg>
<div class="t" style="left:242.5px;top:5px;color:#d2d2d2">Scene</div>
<svg class="a" style="left:280.5px;top:6.5px" width="10" height="5"><rect x="0.5" y="0.5" width="9" height="4" rx="2" fill="#c8c8c8"/><circle cx="2.6" cy="2.5" r="1" fill="#282828"/><path d="M6 3.6 L8 1.4" stroke="#282828" stroke-width="0.8"/></svg>
<div class="t" style="left:291.8px;top:5px;color:#c8c8c8">Game</div>
<!-- scene toolbar -->
<div class="a" style="left:231.5px;top:17px;width:0.8px;height:11px;background:#333;box-shadow:1.6px 0 #333"></div>
<div class="a" style="left:238.5px;top:16.2px;width:23.7px;height:12.6px;background:#4a4a4a;border-radius:2px"></div>
<svg class="a" style="left:241px;top:17.8px" width="10" height="10"><rect x="0.6" y="0.6" width="8.6" height="8.6" fill="none" stroke="#bdbdbd" stroke-width="0.8"/><circle cx="4.6" cy="5" r="2.1" fill="none" stroke="#e9643a" stroke-width="1.1"/><path d="M1.5 8.5 L8.3 1.5" stroke="#bdbdbd" stroke-width="0.5"/></svg>
<svg class="a" style="left:253px;top:21px" width="6" height="3"><path d="M0 0H5.4L2.7 2.8Z" fill="#c8c8c8"/></svg>
<div class="a" style="left:264.9px;top:16.2px;width:23.7px;height:12.6px;background:#4a4a4a;border-radius:2px"></div>
<svg class="a" style="left:267.5px;top:17.5px" width="11" height="11"><path d="M4.5 0.6 L8.4 2.4 L8.4 6.8 L4.5 8.8 L0.6 6.8 L0.6 2.4 Z M0.6 2.4 L4.5 4.3 L8.4 2.4 M4.5 4.3 V8.8" fill="none" stroke="#bdbdbd" stroke-width="0.8"/><circle cx="7.6" cy="8" r="1.7" fill="#4a4a4a" stroke="#e9643a" stroke-width="1"/></svg>
<svg class="a" style="left:280px;top:21px" width="6" height="3"><path d="M0 0H5.4L2.7 2.8Z" fill="#c8c8c8"/></svg>
<div class="a" style="left:295px;top:17px;width:0.8px;height:11px;background:#333;box-shadow:1.6px 0 #333"></div>
<div class="a" style="left:301.9px;top:16.4px;width:23.2px;height:12.3px;background:#46607c;border-radius:2px"></div>
<div class="a" style="left:315.3px;top:16.4px;width:0.8px;height:12.3px;background:#3a526c"></div>
<svg class="a" style="left:304px;top:17.5px" width="10" height="10"><path d="M1.5 1V9M4.5 1V9M0.5 3H8.5M0.5 6H8.5" stroke="#e6e6e6" stroke-width="0.8" stroke-dasharray="1.2 0.8"/><path d="M5 5 L9 9 M6.5 9 H9 V6.5" fill="none" stroke="#ffffff" stroke-width="0.9"/></svg>
<svg class="a" style="left:318px;top:21px" width="6" height="3"><path d="M0 0H5.4L2.7 2.8Z" fill="#d8d8d8"/></svg>
<div class="a" style="left:327.6px;top:16.4px;width:23.5px;height:12.3px;background:#414141;border-radius:2px"></div>
<svg class="a" style="left:329.5px;top:17.5px" width="11" height="10"><path d="M1.5 1V9M4.5 1V9M0.5 3H8M0.5 6H8" stroke="#9a9a9a" stroke-width="0.8" stroke-dasharray="1 1"/><path d="M5.5 6 H8 A1.8 1.8 0 0 1 8 9.4 H5.5" fill="none" stroke="#e35b2e" stroke-width="1.1"/></svg>
<svg class="a" style="left:343px;top:21px" width="6" height="3"><path d="M0 0H5.4L2.7 2.8Z" fill="#8a8a8a"/></svg>
<div class="a" style="left:353.4px;top:16.4px;width:23.5px;height:12.3px;background:#4d4d4d;border-radius:2px"></div>
<svg class="a" style="left:355.5px;top:18px" width="11" height="9"><path d="M1 0.5V8.5M9.5 0.5V8.5M1 4.5H9.5" stroke="#bdbdbd" stroke-width="0.9"/><path d="M3 2V7M5.2 2V7M7.4 2V7" stroke="#9a9a9a" stroke-width="0.6"/></svg>
<svg class="a" style="left:369px;top:21px" width="6" height="3"><path d="M0 0H5.4L2.7 2.8Z" fill="#c8c8c8"/></svg>
<div class="a" style="left:718.5px;top:17px;width:0.8px;height:11px;background:#333;box-shadow:1.6px 0 #333"></div>
<div class="a" style="left:725px;top:16.2px;width:23.4px;height:12.4px;background:#4d4d4d;border-radius:2px"></div>
<svg class="a" style="left:727px;top:17.5px" width="10" height="10"><circle cx="5" cy="5" r="4" fill="#dadada"/><circle cx="4.3" cy="4.4" r="3.1" fill="#4d4d4d"/><circle cx="5" cy="5" r="3.9" fill="none" stroke="#dadada" stroke-width="0.7"/></svg>
<svg class="a" style="left:739.5px;top:21px" width="6" height="3"><path d="M0 0H5.4L2.7 2.8Z" fill="#c8c8c8"/></svg>
<div class="a" style="left:751px;top:16.2px;width:20px;height:12.4px;background:#4d4d4d;border-radius:2px"></div>
<div class="t" style="left:756.5px;top:17.5px;font-size:7px;letter-spacing:-0.2px;color:#d2d2d2">2D</div>


<!-- ===== Project panel ===== -->
<div class="a" style="left:0;top:354px;width:768px;height:12px;background:#282828"></div>
<div class="a" style="left:0;top:354px;width:50px;height:12px;background:#3c3c3c"></div>
<div class="a" style="left:0;top:366px;width:768px;height:13px;background:#3c3c3c"></div>
<div class="a" style="left:0;top:379px;width:130px;height:62px;background:#383838"></div>
<div class="a" style="left:130px;top:379px;width:1px;height:62px;background:#232323"></div>
<div class="a" style="left:131px;top:379px;width:637px;height:13px;background:#3e3e3e"></div>
<div class="a" style="left:131px;top:392px;width:637px;height:49px;background:#333333"></div>
<div class="a" style="left:0;top:429px;width:130px;height:10px;background:#484848"></div>

<!-- project content -->
<div class="a" style="left:648px;top:367.5px;width:125px;height:10.1px;background:#2a2a2a;border-radius:2.5px"></div>
<svg class="a" style="left:650.5px;top:369.5px" width="7" height="7"><circle cx="2.6" cy="2.6" r="1.7" fill="none" stroke="#c0c0c0" stroke-width="1"/><path d="M3.8 3.8 L5.8 5.8" stroke="#c0c0c0" stroke-width="1.1"/></svg>
<div class="a" style="left:0;top:378.9px;width:768px;height:1px;background:#2a2a2a"></div>

<svg class="a" style="left:4px;top:357.5px" width="8" height="6"><path d="M0.3 0.3H3L3.8 1.2H7.7V5.7H0.3Z" fill="#c4c4c4"/></svg>
<div class="t" style="left:14.6px;top:356.6px;color:#d2d2d2">Project</div>
<svg class="a" style="left:56px;top:357px" width="8" height="8"><rect x="0.5" y="0.5" width="6.5" height="7" rx="0.6" fill="#c4c4c4"/><path d="M2 2.5H5.5M2 4H5.5M2 5.5H5.5" stroke="#555" stroke-width="0.6"/></svg>
<div class="t" style="left:65.9px;top:356.6px;color:#c8c8c8">Console</div>
<svg class="a" style="left:3.5px;top:368.5px" width="9" height="9"><path d="M4.3 0.5V8.3M0.5 4.4H8.2" stroke="#d0d0d0" stroke-width="1.4"/></svg>
<svg class="a" style="left:15px;top:371.2px" width="5" height="3"><path d="M0 0H4.6L2.3 2.7Z" fill="#c4c4c4"/></svg>
<div class="a" style="left:0;top:378.7px;width:130px;height:0.8px;background:#2a2a2a"></div>
<svg class="a" style="left:3px;top:381.5px" width="5" height="6"><path d="M0.5 0.3V5.7L4.5 3Z" fill="#6a6a6a"/></svg>
<svg class="a" style="left:11.3px;top:380.8px" width="8" height="8"><path d="M4 0.3L5 2.9L7.7 3L5.6 4.7L6.3 7.4L4 5.9L1.7 7.4L2.4 4.7L0.3 3L3 2.9Z" fill="#d0d0d0"/></svg>
<div class="t" style="left:21.8px;top:379.7px;font-weight:bold;color:#d4d4d4;font-size:7.9px">Favorites</div>
<svg class="a" style="left:2.5px;top:401.5px" width="6" height="5"><path d="M0.3 0.5H5.5L2.9 4.5Z" fill="#6a6a6a"/></svg>
<svg class="a" style="left:11px;top:400px" width="9" height="7"><path d="M0.4 0.4H3.2L4 1.3H7.6V6.5H0.4Z" fill="#d0d0d0"/><path d="M1.6 3H8.6L7.6 6.5H0.4Z" fill="#e8e8e8" stroke="#383838" stroke-width="0.5"/></svg>
<div class="t" style="left:21.8px;top:398.9px;font-weight:bold;color:#d4d4d4;font-size:7.9px">Assets</div>
<svg class="a" style="left:11.5px;top:412px" width="6" height="5"><path d="M0.3 0.5H5.5L2.9 4.5Z" fill="#6a6a6a"/></svg>
<svg class="a" style="left:19.5px;top:410.5px" width="9" height="7"><path d="M0.4 0.4H3.2L4 1.3H7.6V6.5H0.4Z" fill="#d0d0d0"/><path d="M1.6 3H8.6L7.6 6.5H0.4Z" fill="#e8e8e8" stroke="#383838" stroke-width="0.5"/></svg>
<div class="t" style="left:30.2px;top:409.9px;color:#c8c8c8">Models</div>
<svg class="a" style="left:28.5px;top:420.6px" width="8" height="7"><path d="M0.3 0.3H3L3.8 1.2H7.7V6.5H0.3Z" fill="#d0d0d0"/></svg>
<div class="t" style="left:38.8px;top:419.6px;color:#c8c8c8">Ceiling_01</div>
<svg class="a" style="left:28.5px;top:430.6px" width="8" height="7"><path d="M0.3 0.3H3L3.8 1.2H7.7V6.5H0.3Z" fill="#d0d0d0"/></svg>
<div class="t" style="left:38.8px;top:429.6px;color:#c8c8c8">Door_03</div>
<!-- breadcrumb -->
<div class="t" style="left:133.2px;top:381.6px;color:#b4b4b4">Assets</div>
<svg class="a" style="left:161px;top:383px" width="4" height="6"><path d="M0.5 0.5L3 3L0.5 5.5" fill="none" stroke="#9a9a9a" stroke-width="0.8"/></svg>
<div class="t" style="left:167.5px;top:381.6px;color:#b4b4b4">Models</div>
<svg class="a" style="left:198px;top:383px" width="4" height="6"><path d="M0.5 0.5L3 3L0.5 5.5" fill="none" stroke="#9a9a9a" stroke-width="0.8"/></svg>
<div class="t" style="left:204.5px;top:381.6px;font-weight:bold;color:#d2d2d2">Door_03</div>
<!-- asset tiles -->
<div class="a" style="left:140.8px;top:399.9px;width:38.4px;height:37.8px;background:#525252"></div>
<svg class="a" style="left:141px;top:400px" width="38" height="38"><path d="M14.7 2 L22.7 0.9 L22.5 30.2 L15.8 37.2 Z" fill="#070a10"/><path d="M14.7 2 L15.5 2 L16.5 37 L15.8 37.2Z" fill="#1c2a3c"/><path d="M22.1 1 L22.7 0.9 L22.5 30.2 L21.9 30.6Z" fill="#1a2230"/></svg>
<svg class="a" style="left:173.5px;top:413.5px" width="12" height="12"><circle cx="6" cy="6" r="5.4" fill="#e0e0e0" stroke="#3a3a3a" stroke-width="0.6"/><path d="M4.5 3.6 L8.4 6 L4.5 8.4Z" fill="#3a3a3a"/></svg>
<div class="a" style="left:188.6px;top:400px;width:38.1px;height:34px;background:linear-gradient(to right,#000 0%,rgba(0,0,0,0.55) 25%,rgba(0,0,0,0) 50%,rgba(255,255,255,0) 55%,rgba(255,255,255,0.72) 100%),linear-gradient(to bottom,#ff1a1a 0%,#ffd400 18%,#20ff20 38%,#00ffff 55%,#1a1aff 72%,#ff20ff 88%,#ff2080 100%)"></div>
<div class="a" style="left:188.6px;top:434px;width:38.1px;height:2.2px;background:#dcdcdc"></div>
<div class="a" style="left:188.6px;top:436.2px;width:38.1px;height:2.5px;background:linear-gradient(to right,#000,#555 40%,#aaa 70%,#e0e0e0)"></div>

</body></html>
